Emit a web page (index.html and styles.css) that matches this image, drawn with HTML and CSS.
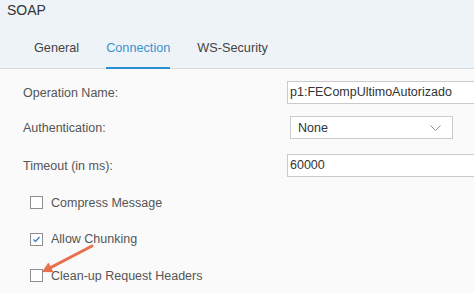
FILE: index.html
```html
<!DOCTYPE html>
<html lang="en">

<head>
    <meta charset="UTF-8">
    <title>SOAP</title>
    <link rel="stylesheet" href="styles.css">
</head>

<body>
    <div class="header">
        <div class="title">SOAP</div>
        <div class="tabs">
            <div class="tab">General</div>
            <div class="tab active">Connection</div>
            <div class="tab">WS-Security</div>
        </div>
    </div>
    <div class="content">
        <div class="row">
            <div class="label">Operation Name:</div>
            <div class="input wide">p1:FECompUltimoAutorizado</div>
        </div>
        <div class="row auth">
            <div class="label">Authentication:</div>
            <div class="select">
                <span>None</span>
                <svg class="chevron" width="11" height="6" viewBox="0 0 11 6">
                    <path d="M0.5 0.5 L5.5 5.5 L10.5 0.5" fill="none" stroke="#8f8f8f" stroke-width="1"/>
                </svg>
            </div>
        </div>
        <div class="row last">
            <div class="label">Timeout (in ms):</div>
            <div class="input wide">60000</div>
        </div>
        <div class="checks">
            <div class="check">
                <span class="box"></span>
                <span>Compress Message</span>
            </div>
            <div class="check">
                <span class="box">
                    <svg width="11" height="11" viewBox="0 0 11 11">
                        <path d="M2.5 5.5 L4.5 7.5 L8.5 3" fill="none" stroke="#3d84c6" stroke-width="1.4"/>
                    </svg>
                </span>
                <span>Allow Chunking</span>
            </div>
            <div class="check">
                <span class="box"></span>
                <span>Clean-up Request Headers</span>
            </div>
        </div>
        <!-- callout arrow drawn over the screenshot -->
        <svg class="arrow" width="70" height="40" viewBox="0 0 70 40">
            <line x1="58" y1="2" x2="17" y2="23.4" stroke="#e8714d" stroke-width="3" stroke-linecap="round"/>
            <polygon points="8,28 14.4,18.5 19.4,28.3" fill="#e8714d"/>
        </svg>
    </div>
</body>

</html>
```

FILE: styles.css
```css
* {
    box-sizing: border-box;
}

body {
    margin: 0;
    background: #fafafa;
    font-family: "Liberation Sans", Arial, sans-serif;
    font-size: 12.5px;
    color: #444;
    overflow: hidden;
}

.header {
    background: #eef3f7;
    border-bottom: 1px solid #d5dadf;
}

.title {
    height: 20px;
    line-height: 20px;
    padding-left: 7px;
    font-size: 14px;
    color: #333;
}

.tabs {
    display: flex;
    height: 48px;
    padding-left: 34px;
    gap: 27px;
}

.tab {
    height: 49px;
    padding-top: 20px;
    line-height: 16px;
    font-size: 12.7px;
    color: #444;
    border-bottom: 2px solid transparent;
}

.tab.active {
    color: #3a94d1;
    border-bottom-color: #2d8fd3;
}

.content {
    position: relative;
    padding-top: 12px;
}

.row {
    display: flex;
    align-items: center;
    height: 23px;
    margin-bottom: 12px;
}

.row.auth {
    margin-bottom: 15px;
}

.row.last {
    margin-bottom: 19px;
}

.label {
    flex-shrink: 0;
    width: 287px;
    padding-left: 23px;
    color: #555;
}

.input {
    height: 23px;
    line-height: 21px;
    padding-left: 2px;
    background: #fff;
    border: 1px solid #cbcbcb;
    color: #333;
    white-space: nowrap;
}

.input.wide {
    width: 200px;
    flex-shrink: 0;
}

.select {
    display: flex;
    align-items: center;
    justify-content: space-between;
    width: 163px;
    height: 23px;
    margin-left: 3px;
    padding: 0 11px 0 7px;
    background: #fff;
    border: 1px solid #cbcbcb;
    color: #333;
}

.chevron {
    display: block;
    margin-top: 1px;
}

.checks {
    display: flex;
    flex-direction: column;
    gap: 23.5px;
    padding-left: 30px;
}

.check {
    display: flex;
    align-items: center;
    height: 13px;
    gap: 8px;
    color: #555;
}

.box {
    display: flex;
    align-items: center;
    justify-content: center;
    width: 13px;
    height: 13px;
    background: #fff;
    border: 1px solid #8e8e8e;
}

.box svg {
    display: block;
}

.arrow {
    position: absolute;
    left: 34px;
    top: 175px;
}
```
